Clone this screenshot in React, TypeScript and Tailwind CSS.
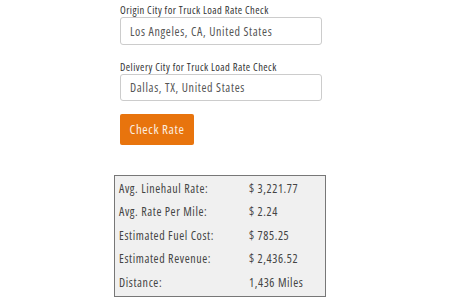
const rows = [
  { label: "Avg. Linehaul Rate:", value: "$ 3,221.77" },
  { label: "Avg. Rate Per Mile:", value: "$ 2.24" },
  { label: "Estimated Fuel Cost:", value: "$ 785.25" },
  { label: "Estimated Revenue:", value: "$ 2,436.52" },
  { label: "Distance:", value: "1,436 Miles" },
];

export default function App() {
  return (
    <div className="min-h-[300px] w-[450px] bg-white pl-[114px] pt-[3px] font-['Open_Sans',sans-serif] font-stretch-condensed">
      <div className="ml-[6px] flex flex-col">
        <label className="text-[10.5px] leading-[14px] tracking-[0.45px] text-[#333]">Origin City for Truck Load Rate Check</label>
        <input
          className="h-[28px] w-[202px] rounded-[3px] border border-[#ccc] px-[9px] text-[12px] tracking-[0.65px] text-[#555]"
          defaultValue="Los Angeles, CA, United States"
        />
        <label className="mt-[15px] text-[10.5px] leading-[14px] tracking-[0.45px] text-[#333]">Delivery City for Truck Load Rate Check</label>
        <input
          className="h-[27px] w-[202px] rounded-[3px] border border-[#ccc] px-[9px] text-[12px] tracking-[0.65px] text-[#555]"
          defaultValue="Dallas, TX, United States"
        />
        <button className="mt-[13px] h-[31px] w-[74px] rounded-[2px] bg-[#e8740d] text-[13px] tracking-[0.6px] text-[#fbeee0]">
          Check Rate
        </button>
      </div>
      <div className="mt-[30px] w-[212px] border border-[#777] bg-[#f0f0f0] pt-[1px] pb-[1px]">
        {rows.map((r) => (
          <div key={r.label} className="flex h-[23.5px] items-center text-[12px] tracking-[0.6px] text-[#444]">
            <span className="w-[134px] pl-[4px]">{r.label}</span>
            <span>{r.value}</span>
          </div>
        ))}
      </div>
    </div>
  );
}
